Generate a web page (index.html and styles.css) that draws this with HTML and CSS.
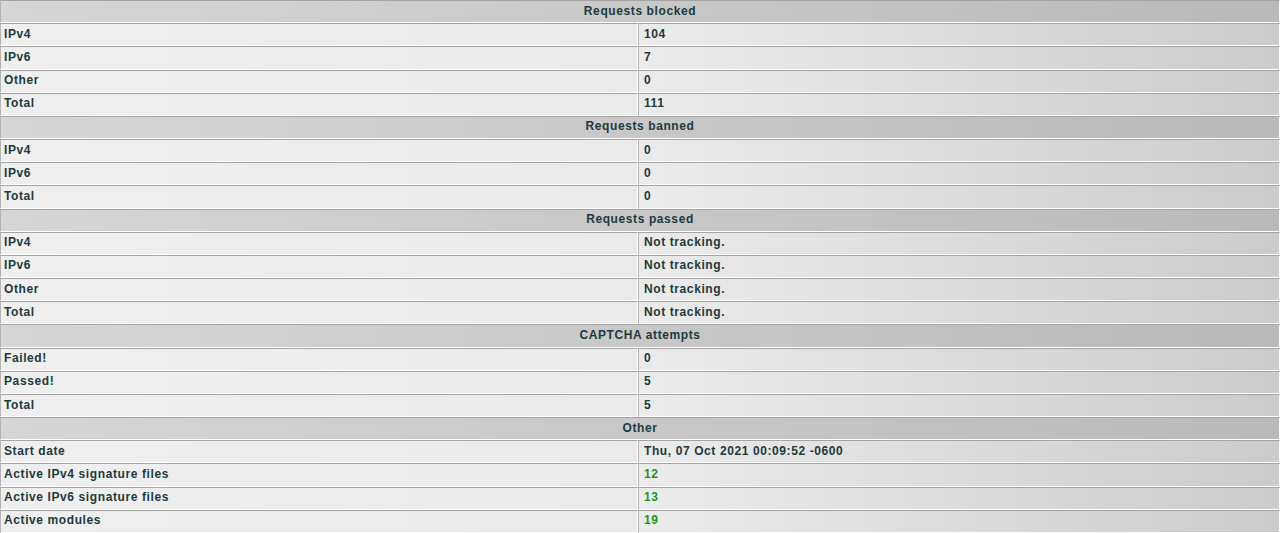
FILE: index.html
```html
<!DOCTYPE html>
<html>
<head>
<meta charset="utf-8">
<link rel="stylesheet" href="styles.css">
</head>
<body>
<table class="stats">
  <colgroup><col class="c1"><col class="c2"></colgroup>
  <tr><td class="head" colspan="2">Requests blocked</td></tr>
  <tr><td class="key">IPv4</td><td class="val">104</td></tr>
  <tr><td class="key">IPv6</td><td class="val">7</td></tr>
  <tr><td class="key">Other</td><td class="val">0</td></tr>
  <tr><td class="key">Total</td><td class="val">111</td></tr>
  <tr><td class="head" colspan="2">Requests banned</td></tr>
  <tr><td class="key">IPv4</td><td class="val">0</td></tr>
  <tr><td class="key">IPv6</td><td class="val">0</td></tr>
  <tr><td class="key">Total</td><td class="val">0</td></tr>
  <tr><td class="head" colspan="2">Requests passed</td></tr>
  <tr><td class="key">IPv4</td><td class="val">Not tracking.</td></tr>
  <tr><td class="key">IPv6</td><td class="val">Not tracking.</td></tr>
  <tr><td class="key">Other</td><td class="val">Not tracking.</td></tr>
  <tr><td class="key">Total</td><td class="val">Not tracking.</td></tr>
  <tr><td class="head" colspan="2">CAPTCHA attempts</td></tr>
  <tr><td class="key">Failed!</td><td class="val">0</td></tr>
  <tr><td class="key">Passed!</td><td class="val">5</td></tr>
  <tr><td class="key">Total</td><td class="val">5</td></tr>
  <tr><td class="head" colspan="2">Other</td></tr>
  <tr><td class="key">Start date</td><td class="val">Thu, 07 Oct 2021 00:09:52 -0600</td></tr>
  <tr><td class="key">Active IPv4 signature files</td><td class="val good">12</td></tr>
  <tr><td class="key">Active IPv6 signature files</td><td class="val good">13</td></tr>
  <tr><td class="key">Active modules</td><td class="val good">19</td></tr>
</table>
</body>
</html>
```
FILE: styles.css
```css
html, body {
  margin: 0;
  padding: 0;
  background: #ffffff;
}
.stats {
  width: 1280px;
  border-collapse: separate;
  border-spacing: 0;
  table-layout: fixed;
  font-family: "Liberation Sans", Arial, sans-serif;
  font-size: 12px;
  font-weight: bold;
  letter-spacing: 0.6px;
  color: #1d3a3c;
}
.stats col.c1 {
  width: 638px;
}
.stats tr {
  height: 23.18px;
}
.stats td {
  padding: 0 3px 2px 3px;
  border-top: 1px solid #a4a4a4;
  border-left: 1px solid #b4b4b4;
  border-bottom: 1px solid #ffffff;
  border-right: 1px solid #ffffff;
  vertical-align: middle;
  white-space: nowrap;
}
.stats td.head {
  text-align: center;
  background: linear-gradient(90deg, #d6d6d6 0%, #c8c8c8 50%, #b9b9b9 100%);
}
.stats td.key {
  background: linear-gradient(90deg, #efefef 0%, #eaeaea 100%);
}
.stats td.val {
  padding-left: 5px;
  background: linear-gradient(90deg, #ebebeb 0%, #dcdcdc 50%, #cbcbcb 100%);
}
.stats td.good {
  color: #1c961c;
}
```
